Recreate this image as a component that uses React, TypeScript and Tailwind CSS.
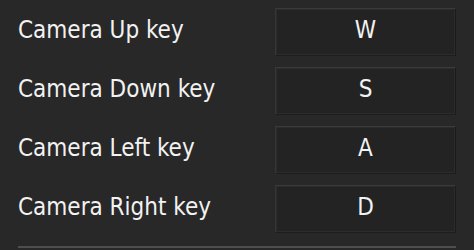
import React from 'react';

const bindings = [
  { label: 'Camera Up key', key: 'W' },
  { label: 'Camera Down key', key: 'S' },
  { label: 'Camera Left key', key: 'A' },
  { label: 'Camera Right key', key: 'D' },
];

const App: React.FC = () => {
  return (
    <div
      className="w-[474px] h-[250px] bg-[#282828] pl-[18px] pt-[8px] overflow-hidden text-[#f2f2f2]"
      style={{ fontFamily: '"DejaVu Sans Condensed", "DejaVu Sans", sans-serif' }}
    >
      <div className="flex flex-col gap-[11px] w-[438px]">
        {bindings.map((b) => (
          <div key={b.label} className="flex items-center h-[48px]">
            <span className="flex-1 text-[24px] leading-none -mt-[4px]">{b.label}</span>
            <div className="w-[181px] h-[48px] bg-[#232323] border border-t-[#3a3a3a] border-l-[#353535] border-r-[#1b1b1b] border-b-[#1d1d1d] shadow-[inset_0_0_0_1px_#2c2c2c] flex items-center justify-center">
              <span className="text-[24px] leading-none -mt-[4px]">{b.key}</span>
            </div>
          </div>
        ))}
      </div>
      <div className="mt-[13px] w-[438px] h-[2px] bg-[#4e4e4e]" />
    </div>
  );
};

export default App;
